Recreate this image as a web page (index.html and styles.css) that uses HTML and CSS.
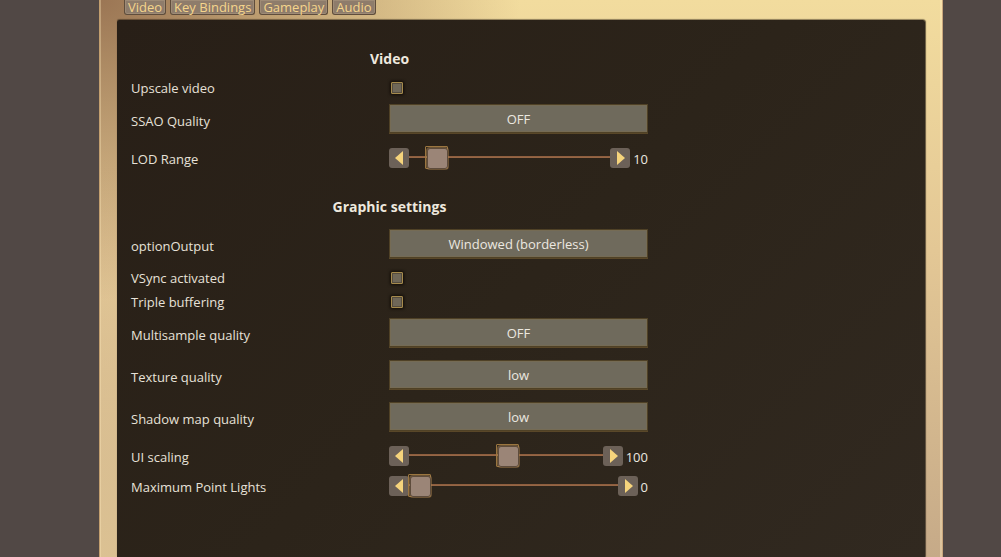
FILE: index.html
```html
<!DOCTYPE html>
<html>
<head>
<meta charset="utf-8">
<link rel="stylesheet" href="styles.css">
</head>
<body>
<div class="frame">
  <div class="tabs">
    <div class="tab">Video</div>
    <div class="tab">Key Bindings</div>
    <div class="tab">Gameplay</div>
    <div class="tab">Audio</div>
  </div>
  <div class="inner">
    <div class="content">
      <div class="heading h-video">Video</div>

      <div class="row r-check m9">
        <div class="label">Upscale video</div>
        <div class="control"><span class="check"></span></div>
      </div>
      <div class="row r-btn m6">
        <div class="label">SSAO Quality</div>
        <div class="control"><div class="btn">OFF</div></div>
      </div>
      <div class="row r-slider m13">
        <div class="label">LOD Range</div>
        <div class="control">
          <div class="slider">
            <span class="arrow left"></span>
            <div class="track"><span class="thumb" style="left: 8.5%"></span></div>
            <span class="arrow right"></span>
          </div>
          <span class="value">10</span>
        </div>
      </div>

      <div class="heading h-graphic">Graphic settings</div>

      <div class="row r-btn m12">
        <div class="label">optionOutput</div>
        <div class="control"><div class="btn">Windowed (borderless)</div></div>
      </div>
      <div class="row r-check m10">
        <div class="label">VSync activated</div>
        <div class="control"><span class="check"></span></div>
      </div>
      <div class="row r-check m4">
        <div class="label">Triple buffering</div>
        <div class="control"><span class="check"></span></div>
      </div>
      <div class="row r-btn m6">
        <div class="label">Multisample quality</div>
        <div class="control"><div class="btn">OFF</div></div>
      </div>
      <div class="row r-btn m13">
        <div class="label">Texture quality</div>
        <div class="control"><div class="btn">low</div></div>
      </div>
      <div class="row r-btn m13">
        <div class="label">Shadow map quality</div>
        <div class="control"><div class="btn">low</div></div>
      </div>
      <div class="row r-slider m13">
        <div class="label">UI scaling</div>
        <div class="control">
          <div class="slider">
            <span class="arrow left"></span>
            <div class="track"><span class="thumb" style="left: 45.5%"></span></div>
            <span class="arrow right"></span>
          </div>
          <span class="value">100</span>
        </div>
      </div>
      <div class="row r-slider m7">
        <div class="label">Maximum Point Lights</div>
        <div class="control">
          <div class="slider">
            <span class="arrow left"></span>
            <div class="track"><span class="thumb" style="left: 0%"></span></div>
            <span class="arrow right"></span>
          </div>
          <span class="value">0</span>
        </div>
      </div>
    </div>
  </div>
</div>
</body>
</html>
```

FILE: styles.css
```css
* { box-sizing: border-box; }
html, body {
  margin: 0;
  padding: 0;
  height: 100%;
  overflow: hidden;
}
body {
  background: #514845;
  font-family: "Open Sans", "Liberation Sans", sans-serif;
}
.frame {
  margin-left: 99px;
  width: 844px;
  height: 557px;
  border-left: 1px solid #c29e6e;
  border-right: 1px solid #c8a67c;
  background:
    radial-gradient(ellipse 420px 300px at 0 0, rgba(150, 112, 80, 0.95), rgba(150, 112, 80, 0) 100%),
    radial-gradient(ellipse 400px 400px at 0 100%, rgba(222, 196, 148, 0.9), rgba(222, 196, 148, 0) 100%),
    linear-gradient(to bottom, #f2dc9e 0%, #e3c795 45%, #c6aa88 100%);
  box-shadow: inset 1px 0 0 rgba(255, 235, 190, 0.35), inset -2px 0 0 rgba(255, 235, 190, 0.4);
  display: flex;
  flex-direction: column;
}
.tabs {
  height: 20px;
  display: flex;
  gap: 4px;
  padding-left: 24px;
  align-items: flex-start;
}
.tab {
  height: 15px;
  padding: 0 3px;
  background: #8e7c6b;
  border: 1px solid #5f4d3c;
  border-top: none;
  border-radius: 0 0 3px 3px;
  color: #f5d58c;
  font-size: 13px;
  line-height: 14px;
  box-shadow: inset 0 0 0 1px rgba(190, 170, 140, 0.35);
}
.inner {
  margin-left: 17px;
  width: 808px;
  flex: 1;
  background: linear-gradient(135deg, #281f17 0%, #2c241a 50%, #312920 100%);
  border-radius: 2px 2px 0 0;
  box-shadow: 1px 0 1px rgba(20, 14, 8, 0.6), 0 -1px 1px rgba(20, 14, 8, 0.4);
}
.content {
  width: 531px;
  padding: 29px 0 0 14px;
  color: #e7e1d8;
  font-size: 13px;
}
.heading {
  text-align: center;
  font-weight: bold;
  font-size: 14px;
  line-height: 20px;
  height: 20px;
  color: #eee8de;
}
.h-graphic { margin-top: 28px; }
.row {
  display: flex;
  align-items: center;
}
.label {
  width: 258px;
  flex: none;
  line-height: 16px;
}
.control {
  flex: 1;
  display: flex;
  align-items: center;
}
.r-check { height: 20px; }
.r-btn { height: 29px; }
.r-btn .label { padding-top: 4px; }
.r-slider { height: 23px; }
.r-slider .label { padding-top: 3px; }
.m4 { margin-top: 4px; }
.m6 { margin-top: 6px; }
.m7 { margin-top: 7px; }
.m9 { margin-top: 9px; }
.m10 { margin-top: 10px; }
.m12 { margin-top: 12px; }
.m13 { margin-top: 13px; }

.check {
  margin-left: 2px;
  width: 12px;
  height: 12px;
  background: #6f6758;
  border: 1px solid #a58a4c;
  border-radius: 1px;
  box-shadow: 0 0 3px 1px rgba(10, 6, 2, 0.8), inset 0 0 0 1px rgba(60, 50, 35, 0.5);
}
.btn {
  flex: 1;
  height: 29px;
  background: #6f6a5c;
  border: 1px solid #4f4126;
  box-shadow: inset 0 0 0 1px rgba(130, 110, 70, 0.35), 0 1px 0 rgba(120, 95, 50, 0.6);
  color: #ece8e0;
  text-align: center;
  padding-top: 2px;
  line-height: 25px;
  font-size: 13px;
}
.slider {
  flex: 1;
  display: flex;
  align-items: center;
  height: 23px;
}
.arrow {
  flex: none;
  width: 20px;
  height: 20px;
  background: #6c6158;
  border-radius: 3px;
  position: relative;
}
.arrow.left::after, .arrow.right::after {
  content: "";
  position: absolute;
  top: 3px;
  width: 0;
  height: 0;
  border-top: 7px solid transparent;
  border-bottom: 7px solid transparent;
}
.arrow.left::after {
  left: 6px;
  border-right: 8px solid #f6d47c;
}
.arrow.right::after {
  left: 7px;
  border-left: 8px solid #f6d47c;
}
.track {
  flex: 1;
  height: 23px;
  position: relative;
  background: linear-gradient(to bottom, transparent 10px, #8a5b3c 10px, #9a6a48 12px, transparent 12px);
}
.thumb {
  position: absolute;
  top: 0;
  width: 23px;
  height: 23px;
  margin-left: -1px;
  border: 1px solid #9b7640;
  border-radius: 1px;
  padding: 1px;
}
.thumb::after {
  content: "";
  display: block;
  width: 19px;
  height: 19px;
  background: #9b8577;
  border: 1px solid #5e4c3c;
  border-radius: 3px;
  box-shadow: 0 0 0 1px rgba(170, 130, 80, 0.5);
}
.value {
  margin-left: 3px;
  font-size: 13px;
  color: #ece8e0;
  padding-top: 3px;
}
```
